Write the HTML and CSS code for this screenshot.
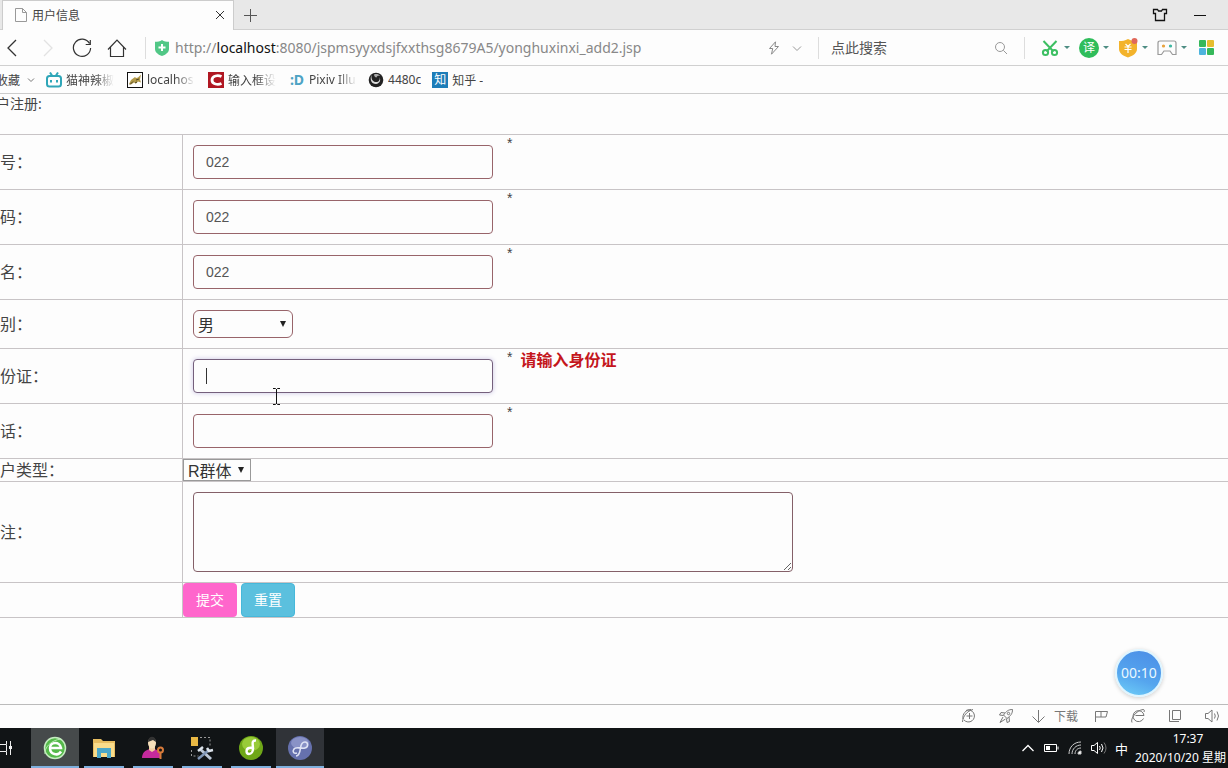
FILE: index.html
```html
<!DOCTYPE html>
<html lang="zh-CN">
<head>
  <meta charset="UTF-8">
  <meta name="viewport" content="width=device-width, initial-scale=1.0">
  <title>用户信息</title>
  <link rel="stylesheet" href="styles.css">
</head>
<body>
  <!-- Tabs -->
  <header class="tab-bar">
    <div class="tab">
      <svg width="12" height="14" viewBox="0 0 12 14" fill="none" stroke="#999"><path d="M.5 .5h7l4 4v9H.5zM7.5 .5v4h4"/></svg>
      <span class="tab-title">用户信息</span>
      <button class="icon-button" aria-label="关闭">
        <svg width="10" height="10" viewBox="0 0 10 10" stroke="#333" fill="none"><path d="M1 1l8 8M9 1l-8 8"/></svg>
      </button>
    </div>
    <button class="icon-button new-tab" aria-label="新标签">
      <svg width="14" height="14" viewBox="0 0 14 14" stroke="#555" fill="none"><path d="M6.5 1v13M0 7.5h13"/></svg>
    </button>
    <div class="window-buttons">
      <button class="icon-button" aria-label="皮肤">
        <svg width="16" height="14" viewBox="0 0 16 14" stroke="#111" stroke-width="1.3" fill="none"><path d="M1.5 1.5h4l1 1.5h3l1-1.5h4v4h-2v7h-9v-7h-2z"/></svg>
      </button>
      <button class="icon-button" aria-label="最小化">
        <svg width="14" height="14" viewBox="0 0 14 14" stroke="#111" fill="none"><path d="M0 7.5h12"/></svg>
      </button>
    </div>
  </header>

  <!-- Address bar -->
  <div class="toolbar">
    <nav class="nav-buttons">
      <button class="icon-button" aria-label="后退">
        <svg width="20" height="20" viewBox="0 0 20 20" stroke="#333" stroke-width="1.3" fill="none"><path d="M14 2L6 10l8 8"/></svg>
      </button>
      <button class="icon-button" aria-label="前进">
        <svg width="20" height="20" viewBox="0 0 20 20" stroke="#e2e2e2" stroke-width="1.3" fill="none"><path d="M7 2l8 8-8 8"/></svg>
      </button>
      <button class="icon-button" aria-label="刷新">
        <svg width="20" height="20" viewBox="0 0 20 20" stroke="#333" stroke-width="1.2" fill="none"><path d="M17.5 5.5A8.6 8.6 0 1 0 18.6 10M18.3 2v4.5h-4.6"/></svg>
      </button>
      <button class="icon-button" aria-label="主页">
        <svg width="20" height="20" viewBox="0 0 20 20" stroke="#333" stroke-width="1.2" fill="none"><path d="M1 11.5l9-9.5 9 9.5M3.5 9v9.5h13V9"/></svg>
      </button>
    </nav>
    <div class="address">
      <svg width="14" height="16" viewBox="0 0 14 16"><path d="M7 0c2 1.500 4.500 1.700 7 1.700V9c0 3.500-3.500 5.800-7 7-3.500-1.200-7-3.500-7-7V1.700C2.500 1.700 5 1.500 7 0z" fill="#51c786"/><path d="M7 4v7M3.500 7.500h7" stroke="#fff" stroke-width="2"/></svg>
      <div class="url" role="textbox" aria-label="地址">http://<b>localhost</b>:8080/jspmsyyxdsjfxxthsg8679A5/yonghuxinxi_add2.jsp</div>
      <button class="icon-button" aria-label="极速模式">
        <svg width="12" height="14" viewBox="0 0 12 14" stroke="#888" fill="none"><path d="M7.500 .8L1.500 7.500h3.200L3.500 13.200 10.500 5.500H7z"/></svg>
      </button>
      <button class="icon-button" aria-label="展开">
        <svg width="10" height="10" viewBox="0 0 10 10" stroke="#999" fill="none"><path d="M1 3.500l4 4 4-4"/></svg>
      </button>
    </div>
    <div class="search">
      <input type="text" class="search-input" placeholder="点此搜索" aria-label="搜索">
      <button class="icon-button" aria-label="搜索">
        <svg width="14" height="14" viewBox="0 0 14 14" stroke="#999" fill="none"><circle cx="6" cy="6" r="4.500"/><path d="M9.300 9.300l3.700 3.700"/></svg>
      </button>
    </div>
    <div class="extensions">
      <button class="extension" aria-label="截图">
        <svg width="20" height="20" viewBox="0 0 20 20" fill="none" stroke="#3cbf62" stroke-width="2"><path d="M3.500 3l10 10.500M16.500 3L6.500 13.500"/><circle cx="5.500" cy="14.500" r="2.600"/><circle cx="14.500" cy="14.500" r="2.600"/></svg>
        <span class="arrow"></span>
      </button>
      <button class="extension" aria-label="翻译">
        <span class="translate">译</span>
        <span class="arrow"></span>
      </button>
      <button class="extension" aria-label="购物">
        <svg width="20" height="20" viewBox="0 0 20 20"><path d="M10 1c3 1.800 5.500 2 9 2v8c0 4-4 7-9 8.500C5 18 1 15 1 11V3c3.500 0 6-.2 9-2z" fill="#f3b32b"/><path d="M7.500 6l2.500 2.500L12.500 6M6.500 9h7M6.500 11.500h7M10 8.500V15" stroke="#fff" stroke-width="1.200" fill="none"/><circle cx="16.500" cy="3" r="3" fill="#e0685a"/></svg>
        <span class="arrow"></span>
      </button>
      <button class="extension" aria-label="游戏">
        <svg width="20" height="20" viewBox="0 0 20 20" fill="none" stroke="#999" stroke-width="1.200"><path d="M3 3h14q2 0 2 2v11.500h-3.500L13 13H7l-2.500 3.500H1V5q0-2 2-2z"/><circle cx="6.500" cy="8" r="1" fill="#e8a33d" stroke="#e8a33d"/><circle cx="13.500" cy="8" r="1" fill="#3db6a0" stroke="#3db6a0"/></svg>
        <span class="arrow"></span>
      </button>
      <button class="extension" aria-label="更多">
        <svg width="20" height="20" viewBox="0 0 20 20"><rect x="3" y="2" width="7" height="7" rx="1" fill="#36b85a"/><rect x="11" y="2" width="7" height="7" rx="1" fill="#e6bd2e"/><rect x="3" y="10" width="7" height="7" rx="1" fill="#4db4dd"/><rect x="11" y="10" width="7" height="7" rx="1" fill="#36b85a"/></svg>
      </button>
    </div>
  </div>

  <!-- Bookmarks -->
  <nav class="bookmarks">
    <button class="favorites">收藏
      <svg width="8" height="8" viewBox="0 0 8 8" stroke="#777" fill="none"><path d="M1 2.500l3 3 3-3"/></svg>
    </button>
    <a class="bookmark" href="#">
      <svg width="16" height="16" viewBox="0 0 16 16" fill="none" stroke="#2fa6b8" stroke-width="2"><rect x="1" y="4" width="14" height="10.500" rx="2.500"/><path d="M4 .5L6 3.500M12 .5l-2 3M5 8v2.500M11 8v2.500"/></svg>
      <span>猫神辣椒</span>
    </a>
    <a class="bookmark" href="#">
      <svg width="16" height="16" viewBox="0 0 16 16"><rect x=".5" y=".5" width="15" height="15" fill="#fff" stroke="#111"/><path d="M2 12l2-4 4-3 1 1 2-.5 3-3-1 5 1 3-3-1-2 2-2-1-3 2z" fill="#b39a4a"/><path d="M3 12.500l3-3M9 8l3-1M8 11l2-1" stroke="#4e4526"/></svg>
      <span>localhos</span>
    </a>
    <a class="bookmark" href="#">
      <svg width="16" height="16" viewBox="0 0 16 16"><rect width="16" height="16" fill="#b01722"/><path d="M13.500 4.500C10 3 4 3.500 4 8s6 5 9.500 3.500" fill="none" stroke="#fff" stroke-width="2.800"/></svg>
      <span>输入框设</span>
    </a>
    <a class="bookmark" href="#">
      <b class="pixiv-icon">:D</b>
      <span>Pixiv Illu</span>
    </a>
    <a class="bookmark plain" href="#">
      <svg width="16" height="16" viewBox="0 0 16 16"><circle cx="8" cy="8" r="7.300" fill="#222"/><path d="M3.500 2.500C3 6 4 9.500 7.500 10c3 .5 5-2 4-5 1.500 3 .5 6.500-3.500 7-4.500 0-6.500-4-4.500-9.500z" fill="#ddd"/><path d="M6 2.500c2-1 5-.5 6 1.500-2-.5-3 0-3.500 1.500C7 5.500 6 4 6 2.500z" fill="#aaa"/></svg>
      <span>4480c</span>
    </a>
    <a class="bookmark plain" href="#">
      <b class="zhihu-icon">知</b>
      <span>知乎 -</span>
    </a>
  </nav>

  <!-- Registration form -->
  <main class="page">
    <form>
      <p class="page-title">户注册:</p>
      <table class="form-table">
        <tr>
          <td class="name"><label for="account">号：</label></td>
          <td><div class="field"><input type="text" id="account" class="form-control" value="022"><span class="required">*</span></div></td>
        </tr>
        <tr>
          <td class="name"><label for="password">码：</label></td>
          <td><div class="field"><input type="text" id="password" class="form-control" value="022"><span class="required">*</span></div></td>
        </tr>
        <tr>
          <td class="name"><label for="realname">名：</label></td>
          <td><div class="field"><input type="text" id="realname" class="form-control" value="022"><span class="required">*</span></div></td>
        </tr>
        <tr>
          <td class="name"><label for="gender">别：</label></td>
          <td><div class="field"><select id="gender" class="gender"><option>男</option><option>女</option></select></div></td>
        </tr>
        <tr>
          <td class="name"><label for="idcard">份证：</label></td>
          <td><div class="field"><input type="text" id="idcard" class="form-control active"><span class="required">*</span><strong class="error">请输入身份证</strong></div></td>
        </tr>
        <tr>
          <td class="name"><label for="phone">话：</label></td>
          <td><div class="field"><input type="text" id="phone" class="form-control"><span class="required">*</span></div></td>
        </tr>
        <tr>
          <td class="name"><label for="usertype">户类型：</label></td>
          <td><div class="field"><select id="usertype" class="usertype"><option>R群体</option></select></div></td>
        </tr>
        <tr>
          <td class="name"><label for="remark">注：</label></td>
          <td><div class="field"><textarea id="remark" class="form-control remark"></textarea></div></td>
        </tr>
        <tr>
          <td class="name"></td>
          <td><div class="actions"><button type="submit" class="btn btn-submit">提交</button><button type="reset" class="btn btn-reset">重置</button></div></td>
        </tr>
      </table>
    </form>
    <svg class="mouse" width="9" height="17" viewBox="0 0 9 17" stroke="#111" fill="none"><path d="M1 .5h2.500l1 1 1-1H8M4.500 1v15M1 16.500h2.500l1-1 1 1H8"/></svg>
    <div class="timer">00:10</div>
  </main>

  <!-- Browser status bar -->
  <footer class="status-bar">
    <button class="icon-button" aria-label="加速">
      <svg width="16" height="16" viewBox="0 0 16 16" stroke="#777" fill="none"><path d="M5 2.500a6 6 0 1 1-2 9.500M1.500 14C2 8 6 3 12 1.500M2 11C1 6 5 1.500 10 1.500M8.500 5v6M5.500 8h6"/></svg>
    </button>
    <button class="icon-button" aria-label="火箭">
      <svg width="16" height="16" viewBox="0 0 16 16" stroke="#777" fill="none"><path d="M14.500 1.500c-4 0-6 1.500-9 5.500l3.500 3.500c4-3 5.500-5 5.500-9zM7 5L3 4.500 1.500 7l4 .5M11 9l.5 4.500-2.500 1-.5-4M5 9l-3 5.500L7.500 11"/><circle cx="10.500" cy="5.500" r="1.200"/></svg>
    </button>
    <button class="download">
      <svg width="16" height="16" viewBox="0 0 16 16" stroke="#777" fill="none"><path d="M8.500 2v12M2.500 8.500l6 6 6-6"/></svg>
      下载
    </button>
    <button class="icon-button" aria-label="标记">
      <svg width="16" height="16" viewBox="0 0 16 16" stroke="#777" fill="none"><path d="M2.500 14V3.500H8V9H2.500M8 3.500h6.500L13 9H8"/></svg>
    </button>
    <button class="icon-button" aria-label="内核">
      <svg width="16" height="16" viewBox="0 0 16 16" stroke="#777" fill="none"><path d="M13.500 10.500a5.500 5.500 0 1 1 .5-3H5.500M2 14.500C0 11 6 2.500 13 1.500c1.500 0 1.500 1 1 2.500"/></svg>
    </button>
    <button class="icon-button" aria-label="窗口">
      <svg width="16" height="16" viewBox="0 0 16 16" stroke="#777" fill="none"><path d="M5.500 2.500h8v9h-8zM2.500 2v11.500H12"/></svg>
    </button>
    <button class="icon-button" aria-label="声音">
      <svg width="16" height="16" viewBox="0 0 16 16" stroke="#777" fill="none"><path d="M1.500 5.500h2.500l4-3.500v12l-4-3.500H1.500zM10.500 5.500q1.500 2.500 0 5M13 3.500q3 4.500 0 9"/></svg>
    </button>
  </footer>

  <!-- Windows taskbar -->
  <footer class="taskbar">
    <button class="icon-button task-view" aria-label="任务视图">
      <svg width="13" height="16" viewBox="0 0 13 16" stroke="#eee" fill="none"><path d="M0 4.500h6.500v7H0M6.500 1v3M6.500 12v3M10.500 1v14"/><path d="M9 6h3v3H9z" fill="#eee" stroke="none"/></svg>
    </button>
    <div class="tasks">
      <button class="task current" aria-label="浏览器">
        <svg width="24" height="24" viewBox="0 0 24 24"><circle cx="12" cy="12" r="10.500" fill="#55b94a" stroke="#c5ecc0" stroke-width="1.500"/><path d="M18 15.500c-3 5-11 3-11-3.500s10-7 11 0H7" stroke="#fff" stroke-width="2.500" fill="none"/><path d="M2 18C1 12 8 4 18 3" stroke="#b7eab1" fill="none"/></svg>
      </button>
      <button class="task" aria-label="文件夹">
        <svg width="24" height="24" viewBox="0 0 24 24"><path d="M1 3h8l2 2h12v16H1z" fill="#e7bd61"/><path d="M2 7h20v14H2z" fill="#f9dc8b"/><path d="M5 12h14v10h-4v-5H9v5H5z" fill="#4ba7c9"/></svg>
      </button>
      <button class="task" aria-label="用户密钥">
        <svg width="24" height="24" viewBox="0 0 24 24"><path d="M1 22c0-5 3-8 8-9h4c5 1 7 4 7 9z" fill="#c52a9d"/><path d="M8 9h6v5l-3 2-3-2z" fill="#f1cda1"/><ellipse cx="11" cy="7" rx="4" ry="5.500" fill="#f6dfba"/><path d="M7 6c0-7 8-7 8 0l-3-2z" fill="#333"/><g stroke="#d87b3b" stroke-width="2" fill="none"><circle cx="19.500" cy="14" r="2.500"/><path d="M19.500 17v6"/></g></svg>
      </button>
      <button class="task" aria-label="工具">
        <svg width="26" height="24" viewBox="0 0 26 24" fill="none"><path d="M2 1h7v9H2z" fill="#e9b844"/><path d="M11 1.500h10v9M2.500 14v6h7" stroke="#999" stroke-dasharray="2 2"/><path d="M11 13l11 10" stroke="#bcc7d6" stroke-width="3"/><path d="M20 14L9 23" stroke="#8197b7" stroke-width="2.500"/><path d="M9 15l5-4M18 12l2 3 4-1" stroke="#dce3eb" stroke-width="2.500"/></svg>
      </button>
      <button class="task" aria-label="Dreamweaver">
        <svg width="24" height="24" viewBox="0 0 24 24" fill="none"><circle cx="12" cy="12" r="12" fill="#6fa718"/><ellipse cx="12" cy="8" rx="9" ry="7" fill="#98cb38"/><path d="M17 4.500c-5-.5-3 4-3 8 0 3-1.500 5.500-4 5.500-3 0-3.500-5 0-6 2-.5 4 0 4.500 1" stroke="#fff" stroke-width="2.400"/></svg>
      </button>
      <button class="task current dim" aria-label="数据库">
        <svg width="24" height="24" viewBox="0 0 24 24" fill="none"><circle cx="12" cy="12" r="12" fill="#6671ad"/><ellipse cx="12" cy="7" rx="9" ry="6" fill="#8992c6"/><path d="M8 20c3 0 4-4 4.500-8S14 6 17 6s4 5 0 6-9-2-11 1 0 5 3 4" stroke="#dfe3f5" stroke-width="1.600"/></svg>
      </button>
    </div>
    <div class="tray">
      <svg width="14" height="16" viewBox="0 0 14 16" stroke="#fff" stroke-width="1.300" fill="none"><path d="M1.500 11L7 5.500l5.500 5.500"/></svg>
      <svg width="16" height="16" viewBox="0 0 16 16" stroke="#fff" fill="none"><path d="M1.500 4.500h12v7h-12zM15 6.500v3"/><path d="M3 6h4v4H3z" fill="#fff" stroke="none"/></svg>
      <svg width="16" height="16" viewBox="0 0 16 16" stroke="#ccc" fill="none"><path d="M2 14C2 7 7 2 14 2M5 14c0-5 4-9 9-9M8 14c0-3.500 2.500-6 6-6"/><path d="M11 14c0-2 1-3 3-3v3z" fill="#fff"/></svg>
      <svg width="16" height="16" viewBox="0 0 16 16" stroke="#fff" fill="none"><path d="M.5 5.500H3l3.500-3v11l-3.500-3H.5zM8.500 6q1.500 2 0 4M10.500 4q3 4 0 8"/><path d="M13 2.500q4 5.500 0 11" stroke="#777"/></svg>
      <span class="ime">中</span>
    </div>
    <div class="clock"><span class="time">17:37</span><span>2020/10/20 星期</span></div>
  </footer>
</body>
</html>
```
FILE: styles.css
```css
/* General */
* {
  box-sizing: border-box;
}

body {
  display: flex;
  flex-direction: column;
  height: 100vh;
  margin: 0;
  overflow: hidden;
  font-family: "Noto Sans", "Noto Sans CJK SC", sans-serif;
  font-size: 12px;
  color: #444;
  background-color: #fdfdfd;
}

button {
  padding: 0;
  border: none;
  background: none;
  font-family: inherit;
  font-size: inherit;
  color: inherit;
  cursor: pointer;
}

svg {
  flex-shrink: 0;
}

.icon-button {
  display: flex;
  align-items: center;
  justify-content: center;
}

/* Tabs */
.tab-bar {
  display: flex;
  flex-shrink: 0;
  height: 30px;
  padding-left: 2px;
  background-color: #e8e8e8;
  box-shadow: inset 0 -1px #d0d0d0;
}

.tab {
  display: flex;
  align-items: center;
  gap: 5px;
  width: 232px;
  padding: 0 8px 2px 12px;
  border: 1px solid #ccc;
  border-bottom: none;
  background-color: #fdfdfd;
}

.tab-title {
  flex: 1;
}

.new-tab {
  width: 34px;
}

.window-buttons {
  display: flex;
  gap: 26px;
  margin-left: auto;
  padding-right: 20px;
}

/* Address bar */
.toolbar {
  display: flex;
  align-items: center;
  flex-shrink: 0;
  height: 36px;
  border-bottom: 1px solid #d0d0d0;
}

.nav-buttons {
  display: flex;
  gap: 11px;
  padding-right: 16px;
}

.nav-buttons .icon-button {
  width: 24px;
}

.address,
.search,
.extensions {
  display: flex;
  align-items: center;
  height: 22px;
  border-left: 1px solid #ddd;
}

.address {
  flex: 1;
  gap: 12px;
  padding: 0 16px 0 9px;
}

.url {
  flex: 1;
  margin-left: -6px;
  font-size: 14px;
  white-space: nowrap;
  color: #888;
}

.url b {
  font-weight: normal;
  color: #111;
}

.search {
  width: 206px;
  padding: 0 16px 0 12px;
}

.search-input {
  flex: 1;
  min-width: 0;
  padding: 0;
  border: none;
  outline: none;
  font-family: inherit;
  font-size: 14px;
  background: none;
}

.search-input::placeholder {
  color: #555;
}

.extensions {
  gap: 9px;
  padding: 0 12px 0 15px;
}

.extension {
  display: flex;
  align-items: center;
  gap: 4px;
}

.translate {
  width: 20px;
  height: 20px;
  border-radius: 50%;
  background-color: #2fbd5b;
  color: #fff;
  line-height: 20px;
}

.arrow {
  border: 3px solid transparent;
  border-top-color: #4e8d83;
  border-bottom: none;
}

/* Bookmarks */
.bookmarks {
  display: flex;
  align-items: center;
  flex-shrink: 0;
  gap: 13px;
  height: 28px;
  border-bottom: 1px solid #ccc;
}

.favorites {
  display: flex;
  align-items: center;
  gap: 7px;
  margin: 0 -2px 0 -4px;
}

.bookmark {
  display: flex;
  align-items: center;
  gap: 4px;
  color: #444;
  text-decoration: none;
  white-space: nowrap;
}

.bookmark span {
  width: 48px;
  overflow: hidden;
  mask-image: linear-gradient(to right, #000 60%, transparent);
}

.bookmark.plain {
  margin-left: -2px;
}

.bookmark.plain span {
  width: auto;
  mask-image: none;
}

.pixiv-icon,
.zhihu-icon {
  width: 16px;
  height: 16px;
  line-height: 16px;
  text-align: center;
}

.pixiv-icon {
  font-size: 14px;
  color: #4da3c4;
}

.zhihu-icon {
  font-weight: normal;
  background-color: #1d7db8;
  color: #fff;
}

/* Page */
.page {
  position: relative;
  flex: 1;
  min-height: 0;
}

.page-title {
  height: 40px;
  margin: 0 0 0 -4px;
  font-size: 14px;
  line-height: 20px;
}

.form-table {
  width: 100%;
  border-top: 1px solid #c8c4c6;
  border-spacing: 0;
}

.form-table td {
  padding: 0;
  border-bottom: 1px solid #c8c4c6;
}

.form-table .name {
  width: 183px;
  border-right: 1px solid #c8c4c6;
  font-size: 16px;
  line-height: 22px;
}

.field {
  display: flex;
  align-items: flex-start;
}

.form-control {
  width: 300px;
  height: 34px;
  margin: 10px;
  padding: 6px 12px;
  border: 1px solid #98646a;
  border-radius: 4px;
  outline: none;
  font-family: "Liberation Sans", Arial, sans-serif;
  font-size: 14px;
  color: #555;
  background-color: #fdfdfd;
}

/* Field being edited, with its text caret */
.form-control.active {
  border-color: #75607c;
  box-shadow: 0 0 5px #ccc6e6;
  background-image: linear-gradient(#333, #333);
  background-repeat: no-repeat;
  background-position: 12px center;
  background-size: 1px 16px;
}

.form-control.remark {
  width: 600px;
  height: 80px;
  border-color: #846068;
}

.required {
  padding: 0 8px 0 4px;
  font-family: "Liberation Sans", Arial, sans-serif;
  font-size: 14px;
  line-height: 16px;
}

.error {
  font-size: 16px;
  line-height: 22px;
  color: #c4161c;
}

select {
  appearance: none;
  padding: 2px 4px 0;
  border: 1px solid #98646a;
  font-family: "Liberation Sans", "Noto Sans CJK SC", sans-serif;
  font-size: 16px;
  color: #333;
  background: #fdfdfd url("data:image/svg+xml;charset=UTF-8,%3Csvg xmlns='http://www.w3.org/2000/svg' width='6' height='6'%3E%3Cpath d='M0 0h6L3 6z' fill='%23222'/%3E%3C/svg%3E") no-repeat right 6px center;
}

.gender {
  width: 100px;
  height: 28px;
  margin: 10px;
  border-radius: 6px;
}

.usertype {
  width: 68px;
  height: 22px;
  border-color: #999;
}

.actions {
  display: flex;
  gap: 4px;
}

.btn {
  width: 54px;
  height: 34px;
  padding-bottom: 2px;
  border-radius: 4px;
  font-size: 14px;
  color: #fff;
}

.btn-submit {
  background-color: #ff66cc;
}

.btn-reset {
  background-color: #5bc0de;
  border: 1px solid #46b8da;
}

/* Mouse pointer and recorder bubble float over the page */
.mouse {
  position: absolute;
  top: 294px;
  left: 272px;
}

.timer {
  position: absolute;
  right: 65px;
  bottom: 7px;
  width: 48px;
  height: 48px;
  border: 2px solid #dff5ff;
  border-radius: 50%;
  background: linear-gradient(200deg, #4a8de6, #55a5ee 60%, #6fd0f8);
  box-shadow: 0 1px 4px #ccc;
  font-size: 14px;
  line-height: 44px;
  text-align: center;
  color: #e9f8ff;
}

/* Status bar */
.status-bar {
  display: flex;
  align-items: center;
  justify-content: flex-end;
  flex-shrink: 0;
  gap: 21px;
  height: 24px;
  padding: 0 8px 2px 0;
  border-top: 1px solid #bbb;
  color: #777;
}

.download {
  display: flex;
  align-items: center;
  gap: 8px;
  margin: 0 -6px 0 -5px;
}

/* Taskbar */
.taskbar {
  display: flex;
  flex-shrink: 0;
  height: 40px;
  background-color: #111416;
  color: #fff;
}

.task-view {
  width: 31px;
  justify-content: flex-start;
}

.tasks {
  display: flex;
  gap: 1px;
}

.task {
  display: flex;
  align-items: center;
  justify-content: center;
  width: 48px;
  background: linear-gradient(#7fb0de, #7fb0de) no-repeat center bottom / 40px 2px;
}

.task.current {
  background-color: #464a4b;
  background-size: 48px 2px;
}

.task.dim {
  background-color: #303338;
}

.tray {
  display: flex;
  align-items: center;
  gap: 8px;
  margin-left: auto;
  padding: 0 7px 0 0;
}

.ime {
  font-size: 13px;
}

/* The date runs on past the edge of the screen */
.clock {
  display: flex;
  flex-direction: column;
  justify-content: center;
  width: 93px;
  line-height: 19px;
  white-space: nowrap;
}

.time {
  width: 106px;
  text-align: center;
}
```
